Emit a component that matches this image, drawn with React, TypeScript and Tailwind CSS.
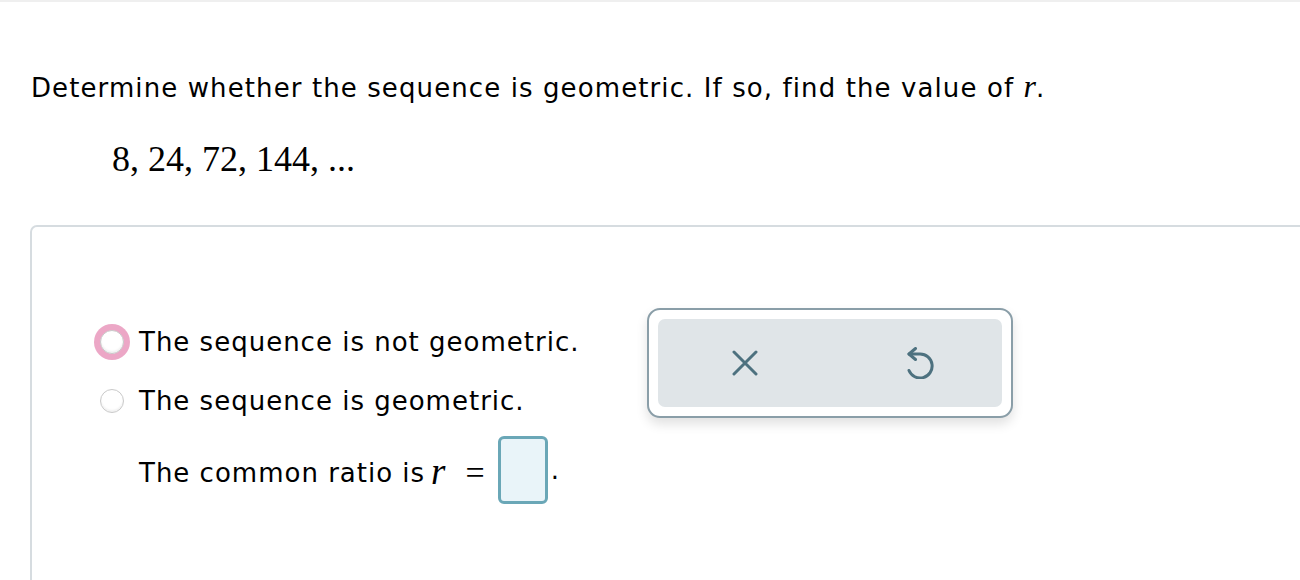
import React from "react";

const sans = { fontFamily: '"DejaVu Sans", Verdana, sans-serif' };
const serif = { fontFamily: '"Liberation Serif", "Times New Roman", serif' };

function Radio({ selected }: { selected?: boolean }) {
  return (
    <div className="w-[36px] h-[36px] flex items-center justify-center shrink-0">
      {selected ? (
        <div className="w-[36px] h-[36px] rounded-full bg-[#eca7c6] flex items-center justify-center">
          <div className="w-[24px] h-[24px] rounded-full bg-white border border-[#c9c9c9] shadow-[inset_0_-2px_2px_rgba(0,0,0,0.06)]" />
        </div>
      ) : (
        <div className="w-[24px] h-[24px] rounded-full bg-white border border-[#c9c9c9] shadow-[inset_0_-2px_2px_rgba(0,0,0,0.06)]" />
      )}
    </div>
  );
}

export default function App() {
  return (
    <div className="w-[1300px] h-[580px] overflow-hidden bg-white border-t-2 border-[#efefef] text-black" style={sans}>
      <div className="pl-[31px] pt-[67px] text-[26px] leading-[34px] tracking-[1.1px]">
        Determine whether the sequence is geometric. If so, find the value of{" "}
        <span className="italic text-[32px] tracking-normal" style={serif}>r</span>.
      </div>
      <div className="pl-[112px] pt-[33px] text-[36px] leading-[42px]" style={serif}>
        8, 24, 72, 144, ...
      </div>
      <div className="ml-[30px] mt-[45px] w-[1300px] h-[400px] border-2 border-[#d6dce0] rounded-[7px] pt-[81px] pl-[62px] flex items-start">
        <div className="w-[553px] pt-[16px] text-[26px] tracking-[1px]">
          <div className="flex items-center h-[36px] gap-[9px]">
            <Radio selected />
            <span className="leading-[36px]">The sequence is not geometric.</span>
          </div>
          <div className="flex items-center h-[36px] gap-[9px] mt-[23px]">
            <Radio />
            <span className="leading-[36px]">The sequence is geometric.</span>
          </div>
          <div className="flex items-center mt-[17px] pl-[45px] h-[68px]">
            <span className="mt-[6px]">The common ratio is</span>
            <span className="italic ml-[6px] mt-[4px] text-[37px] tracking-normal" style={serif}>
              r
            </span>
            <span className="ml-[20px] mt-[4px] text-[34px] tracking-normal" style={serif}>
              =
            </span>
            <div className="ml-[13px] w-[50px] h-[68px] shrink-0 border-[3px] border-[#6aa7b7] bg-[#e9f4f9] rounded-[6px]" />
            <span className="ml-[3px] self-end mb-[14px]">.</span>
          </div>
        </div>
        <div className="w-[366px] h-[110px] border-2 border-[#8a9ea8] rounded-[13px] bg-white p-[9px] shadow-[0_6px_12px_rgba(0,0,0,0.12)]">
          <div className="w-full h-full bg-[#e0e5e8] rounded-[7px] flex items-center">
            <div className="w-[172px] flex justify-center pl-[2px]">
              <svg width="26" height="26" viewBox="0 0 26 26" fill="none" stroke="#4d717f" strokeWidth="3" strokeLinecap="round">
                <path d="M2 2 L24 24 M24 2 L2 24" />
              </svg>
            </div>
            <div className="w-[172px] flex justify-center pl-[8px]">
              <svg width="32" height="32" viewBox="0 0 32 32" fill="none" stroke="#4d717f" strokeWidth="3" strokeLinecap="round" strokeLinejoin="round">
                <path d="M5 7 L16 7 A12 12 0 1 1 5 23.5" />
                <path d="M11.5 1.5 L5 7 L11.5 12.5" />
              </svg>
            </div>
          </div>
        </div>
      </div>
    </div>
  );
}
